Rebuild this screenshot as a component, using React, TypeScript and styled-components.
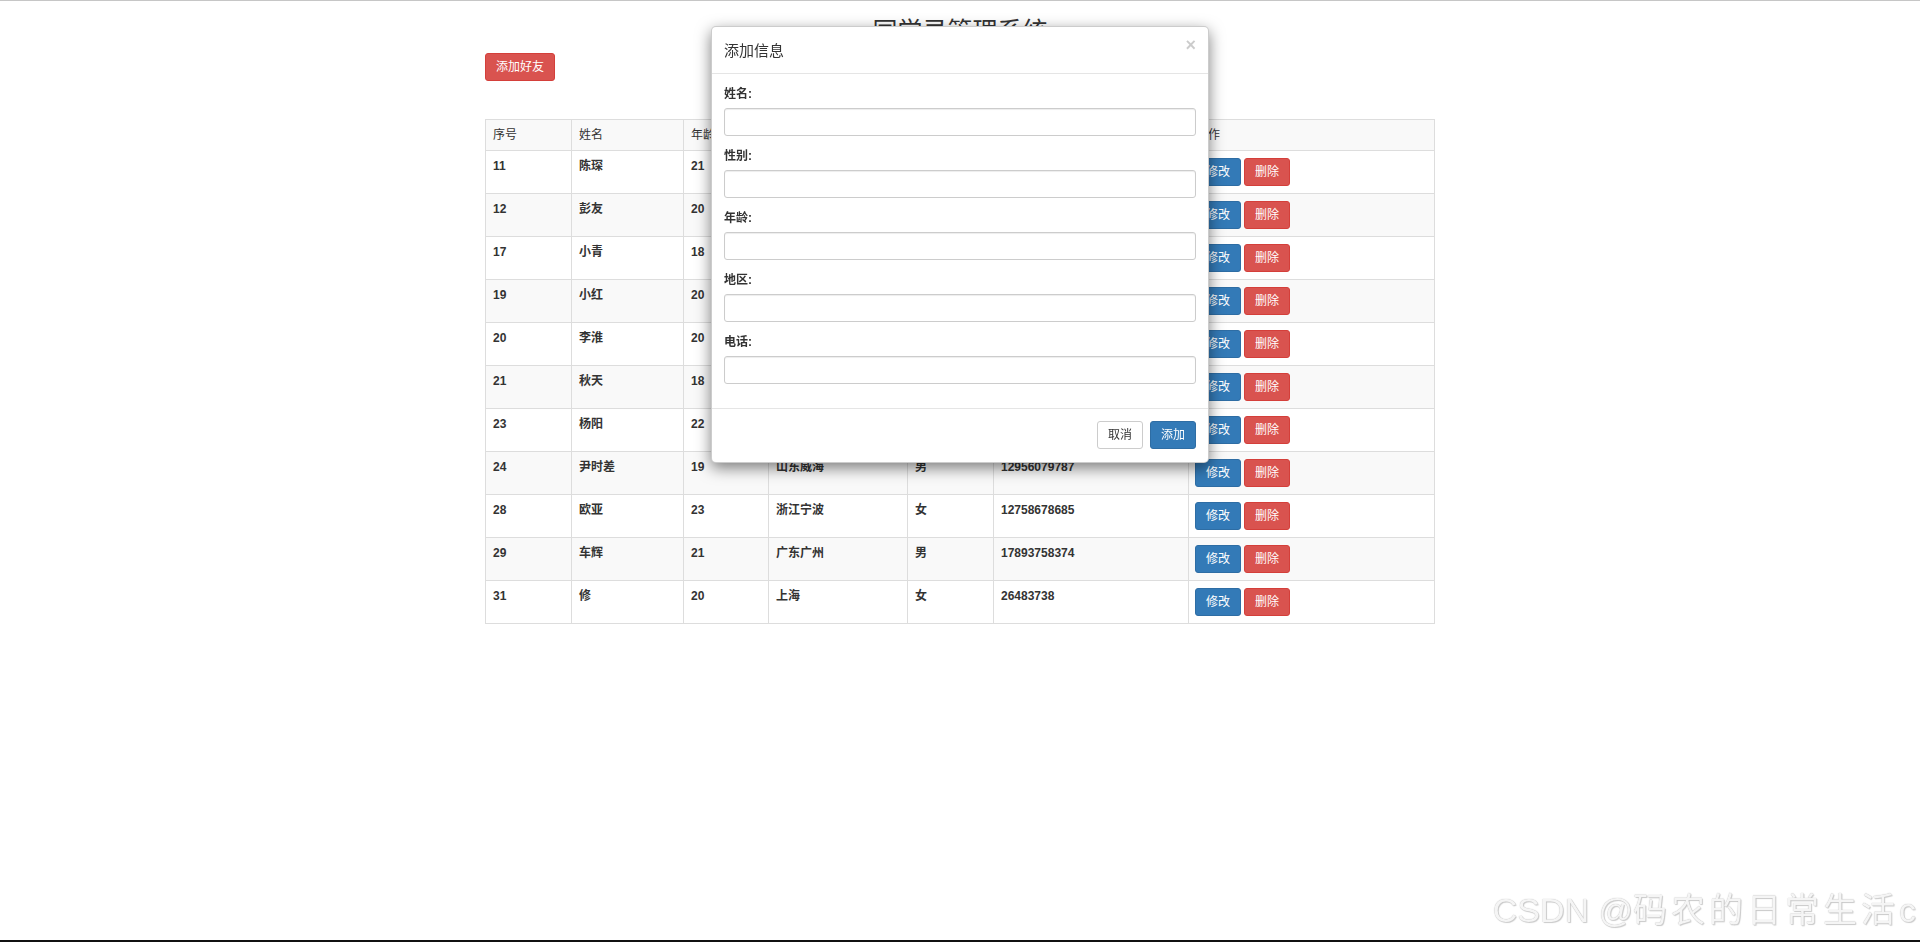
import React from 'react';
import styled, { createGlobalStyle, css } from 'styled-components';

const GlobalStyle = createGlobalStyle`
  html, body {
    margin: 0;
    padding: 0;
  }
  body {
    font-family: 'Liberation Sans', 'Noto Sans CJK SC', Arial, sans-serif;
    font-size: 12px;
    color: #333;
    background: #fff;
  }
  * {
    box-sizing: border-box;
  }
`;

const Page = styled.div`
  position: relative;
  min-height: 100vh;
  display: flex;
  flex-direction: column;
  align-items: center;
  border-top: 1px solid #c6c6c6;
  border-bottom: 2px solid #111;
`;

const Container = styled.div`
  width: 950px;
`;

const Title = styled.h3`
  margin: 16px 0 0 0;
  font-size: 25px;
  line-height: 28px;
  font-weight: 400;
  text-align: center;
  color: #333;
`;

const Toolbar = styled.div`
  display: flex;
  margin: 8px 0 38px 0;
`;

type Variant = 'primary' | 'danger' | 'default';

const variants = {
  primary: css`
    background: #337ab7;
    border-color: #2e6da4;
    color: #fff;
  `,
  danger: css`
    background: #d9534f;
    border-color: #d43f3a;
    color: #fff;
  `,
  default: css`
    background: #fff;
    border-color: #ccc;
    color: #333;
  `,
};

const Button = styled.button<{ $variant: Variant }>`
  font-family: inherit;
  font-size: 12px;
  line-height: 18px;
  padding: 4px 10px;
  border: 1px solid;
  border-radius: 3px;
  cursor: pointer;
  ${p => variants[p.$variant]}
`;

const Table = styled.table`
  width: 949px;
  border-collapse: collapse;
  table-layout: fixed;
  border: 1px solid #ddd;
`;

const Row = styled.tr`
  &:nth-of-type(odd) {
    background: #f9f9f9;
  }
`;

const HeadCell = styled.th`
  text-align: left;
  font-weight: 400;
  padding: 7px;
  line-height: 16px;
  border: 1px solid #ddd;
  vertical-align: top;
`;

const Cell = styled.td`
  font-weight: 700;
  padding: 7px;
  line-height: 17px;
  border: 1px solid #ddd;
  vertical-align: top;
`;

const Actions = styled.div`
  display: flex;
  gap: 3px;
  margin-left: -1px;
`;

const Overlay = styled.div`
  position: fixed;
  inset: 0;
  display: flex;
  justify-content: center;
  align-items: flex-start;
  padding-top: 26px;
`;

const ModalContent = styled.div`
  width: 498px;
  background: #fff;
  border: 1px solid rgba(0, 0, 0, 0.2);
  border-radius: 5px;
  box-shadow: 0 5px 15px rgba(0, 0, 0, 0.5);
`;

const ModalHeader = styled.div`
  display: flex;
  justify-content: space-between;
  align-items: flex-start;
  padding: 13px 12px 12px 12px;
  border-bottom: 1px solid #e5e5e5;
`;

const ModalTitle = styled.h4`
  margin: 0;
  font-size: 15px;
  line-height: 21px;
  font-weight: 400;
`;

const Close = styled.button`
  background: none;
  border: none;
  padding: 0;
  margin-top: -4px;
  font-family: 'Liberation Sans', Arial, sans-serif;
  font-size: 18px;
  font-weight: 700;
  line-height: 1;
  color: #000;
  opacity: 0.2;
  cursor: pointer;
`;

const ModalBody = styled.div`
  padding: 12px;
`;

const FormGroup = styled.div`
  margin-bottom: 12px;
`;

const Label = styled.label`
  display: block;
  font-weight: 700;
  line-height: 17px;
  margin-bottom: 5px;
`;

const Input = styled.input`
  display: block;
  width: 100%;
  height: 28px;
  padding: 4px 8px;
  border: 1px solid #ccc;
  border-radius: 3px;
  box-shadow: inset 0 1px 1px rgba(0, 0, 0, 0.075);
  font-family: inherit;
  font-size: 12px;
`;

const ModalFooter = styled.div`
  display: flex;
  justify-content: flex-end;
  gap: 7px;
  padding: 12px 12px 13px 12px;
  border-top: 1px solid #e5e5e5;
`;

const Watermark = styled.div`
  position: absolute;
  right: 4px;
  bottom: 13px;
  font-family: 'Liberation Sans', 'Noto Sans CJK SC', sans-serif;
  font-size: 34px;
  line-height: 1;
  color: #f5f5f5;
  text-shadow: 0 0 1px #a8a8a8, 1px 1px 1px rgba(0, 0, 0, 0.2);
  white-space: nowrap;
  pointer-events: none;
`;

const WatermarkCjk = styled.span`
  font-family: 'Noto Sans CJK SC', sans-serif;
  font-size: 34px;
  letter-spacing: 4px;
`;

const columns = [
  { label: '序号', width: 86 },
  { label: '姓名', width: 112 },
  { label: '年龄', width: 85 },
  { label: '地区', width: 139 },
  { label: '性别', width: 86 },
  { label: '电话', width: 195 },
  { label: '操作', width: 246 },
];

const friends = [
  { id: 11, name: '陈琛', age: 21, area: '湖南长沙', sex: '男', phone: '13845678912' },
  { id: 12, name: '彭友', age: 20, area: '湖北武汉', sex: '男', phone: '15623458796' },
  { id: 17, name: '小青', age: 18, area: '江苏南京', sex: '女', phone: '13978564213' },
  { id: 19, name: '小红', age: 20, area: '四川成都', sex: '女', phone: '18745632198' },
  { id: 20, name: '李淮', age: 20, area: '安徽合肥', sex: '男', phone: '13698745632' },
  { id: 21, name: '秋天', age: 18, area: '北京', sex: '女', phone: '15987456321' },
  { id: 23, name: '杨阳', age: 22, area: '河南郑州', sex: '男', phone: '17712345698' },
  { id: 24, name: '尹时差', age: 19, area: '山东威海', sex: '男', phone: '12956079787' },
  { id: 28, name: '欧亚', age: 23, area: '浙江宁波', sex: '女', phone: '12758678685' },
  { id: 29, name: '车辉', age: 21, area: '广东广州', sex: '男', phone: '17893758374' },
  { id: 31, name: '修', age: 20, area: '上海', sex: '女', phone: '26483738' },
];

const fields = ['姓名', '性别', '年龄', '地区', '电话'];

export default function App() {
  return (
    <>
      <GlobalStyle />
      <Page>
        <Container>
          <Title>同学录管理系统</Title>
          <Toolbar>
            <Button $variant="danger">添加好友</Button>
          </Toolbar>
          <Table>
            <colgroup>
              {columns.map(c => (
                <col key={c.label} style={{ width: c.width }} />
              ))}
            </colgroup>
            <tbody>
              <Row>
                {columns.map(c => (
                  <HeadCell key={c.label}>{c.label}</HeadCell>
                ))}
              </Row>
              {friends.map(f => (
                <Row key={f.id}>
                  <Cell>{f.id}</Cell>
                  <Cell>{f.name}</Cell>
                  <Cell>{f.age}</Cell>
                  <Cell>{f.area}</Cell>
                  <Cell>{f.sex}</Cell>
                  <Cell>{f.phone}</Cell>
                  <Cell>
                    <Actions>
                      <Button $variant="primary">修改</Button>
                      <Button $variant="danger">删除</Button>
                    </Actions>
                  </Cell>
                </Row>
              ))}
            </tbody>
          </Table>
        </Container>

        <Overlay>
          <ModalContent>
            <ModalHeader>
              <ModalTitle>添加信息</ModalTitle>
              <Close aria-label="关闭">&times;</Close>
            </ModalHeader>
            <ModalBody>
              {fields.map(f => (
                <FormGroup key={f}>
                  <Label>{f}:</Label>
                  <Input type="text" />
                </FormGroup>
              ))}
            </ModalBody>
            <ModalFooter>
              <Button $variant="default">取消</Button>
              <Button $variant="primary">添加</Button>
            </ModalFooter>
          </ModalContent>
        </Overlay>

        <Watermark>
          CSDN @<WatermarkCjk>码农的日常生活</WatermarkCjk>c
        </Watermark>
      </Page>
    </>
  );
}
